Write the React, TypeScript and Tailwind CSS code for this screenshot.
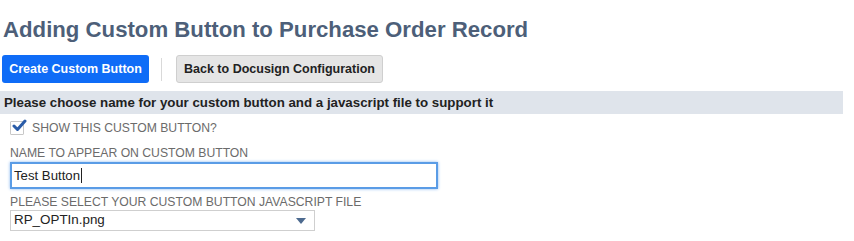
import React from "react";

export default function App() {
  return (
    <div className="w-[854px] h-[241px] bg-white overflow-hidden" style={{ fontFamily: '"Liberation Sans", Arial, sans-serif' }}>
      <div className="pl-[3px] pt-[18px]">
        <h1 className="text-[22.2px] leading-[24px] font-bold text-[#4d5f79]">Adding Custom Button to Purchase Order Record</h1>
      </div>
      <div className="flex items-center pl-[2px] mt-[13px] h-[28px]">
        <button className="h-[28px] w-[147px] rounded-[3px] bg-[#0f6cf7] text-white text-[12.5px] font-bold">Create Custom Button</button>
        <div className="w-px h-[23px] bg-[#d9d9d9] ml-[12px] mr-[14px]" />
        <button className="h-[28px] w-[207px] rounded-[3px] bg-[#e5e5e5] border border-[#cfcfcf] text-[#222] text-[12.5px] font-bold">Back to Docusign Configuration</button>
      </div>
      <div className="mt-[8px] mr-[11px] h-[23px] bg-[#dfe4eb] flex items-center pl-[4px]">
        <span className="text-[13.3px] font-bold text-[#222]">Please choose name for your custom button and a javascript file to support it</span>
      </div>
      <div className="flex items-center pl-[10px] mt-[6px] h-[16px]">
        <div className="relative w-[14px] h-[14px] border border-[#c8c8c8] bg-white rounded-[1px]">
          <svg className="absolute left-[1px] top-[-3px]" width="15" height="13" viewBox="0 0 15 13">
            <path d="M2 7 L5.5 10.5 L13 2" stroke="#2a5ca8" strokeWidth="3" fill="none" strokeLinecap="round" strokeLinejoin="round" />
          </svg>
        </div>
        <span className="ml-[8px] text-[12.2px] text-[#6b6b6b] uppercase">Show this custom button?</span>
      </div>
      <div className="pl-[10px] mt-[10px] text-[12.2px] leading-[14px] text-[#6b6b6b]">NAME TO APPEAR ON CUSTOM BUTTON</div>
      <div className="pl-[10px] mt-[2px]">
        <div className="w-[428px] h-[27px] border-2 border-[#5a9ce6] shadow-[0_0_3px_#8ab8f0] flex items-center pl-[2px] text-[13.2px] text-[#222]">
          Test Button<span className="w-px h-[15px] bg-[#222] ml-[1px]" />
        </div>
      </div>
      <div className="pl-[10px] mt-[6px] text-[12.2px] leading-[14px] text-[#6b6b6b]">PLEASE SELECT YOUR CUSTOM BUTTON JAVASCRIPT FILE</div>
      <div className="pl-[10px] mt-[1px]">
        <div className="w-[305px] h-[21px] border border-[#cfcfcf] flex items-center justify-between pl-[3px] pr-[8px] text-[13.4px] text-[#222]">
          <span>RP_OPTIn.png</span>
          <svg width="10" height="6" viewBox="0 0 10 6"><path d="M0 0 H10 L5 6 Z" fill="#4d6a8f" /></svg>
        </div>
      </div>
    </div>
  );
}
